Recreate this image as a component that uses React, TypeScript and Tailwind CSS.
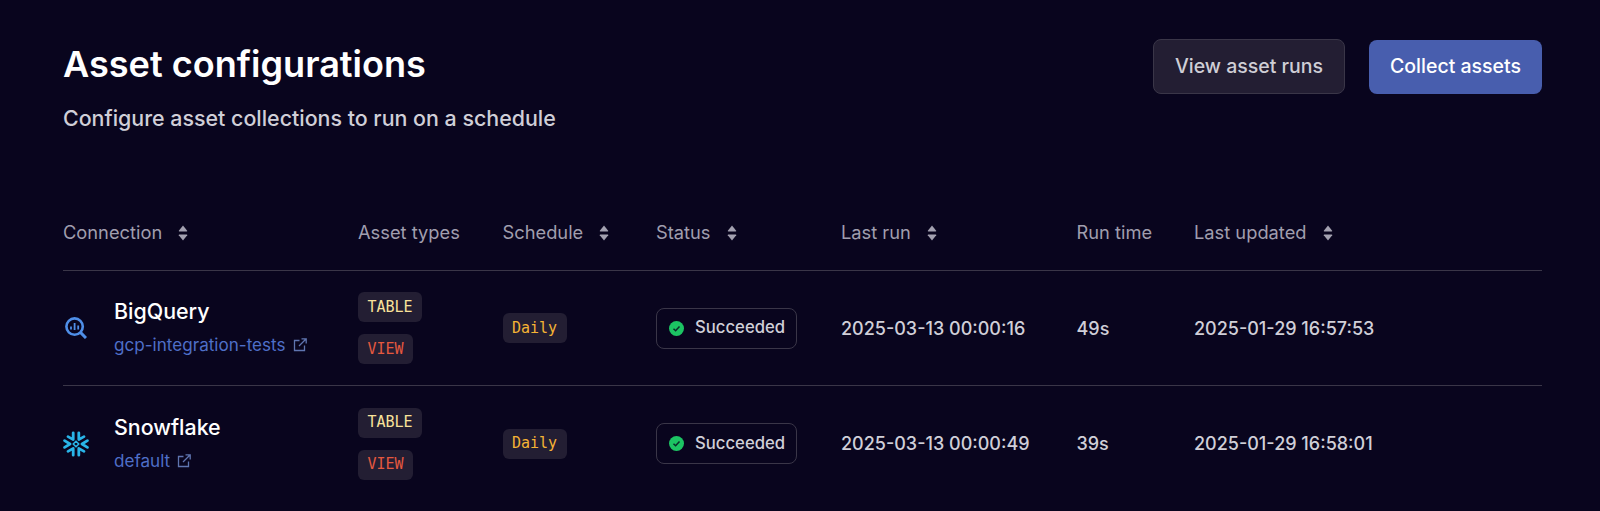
const gridCols = 'grid grid-cols-[295px_144.5px_153.5px_185px_235.5px_117.5px_1fr]';

const columns = [
  { label: 'Connection', sortable: true },
  { label: 'Asset types', sortable: false },
  { label: 'Schedule', sortable: true },
  { label: 'Status', sortable: true },
  { label: 'Last run', sortable: true },
  { label: 'Run time', sortable: false },
  { label: 'Last updated', sortable: true },
];

const rows = [
  {
    id: 'bigquery',
    name: 'BigQuery',
    project: 'gcp-integration-tests',
    lastRun: '2025-03-13 00:00:16',
    runTime: '49s',
    updated: '2025-01-29 16:57:53',
  },
  {
    id: 'snowflake',
    name: 'Snowflake',
    project: 'default',
    lastRun: '2025-03-13 00:00:49',
    runTime: '39s',
    updated: '2025-01-29 16:58:01',
  },
];

function SortIcon() {
  return (
    <svg width="10" height="16" viewBox="0 0 10 16" className="text-[#a3a1b0]" fill="currentColor">
      <path d="M5 0.5 L9.2 5.8 Q9.4 6.5 8.7 6.5 L1.3 6.5 Q0.6 6.5 0.8 5.8 Z" />
      <path d="M5 15.5 L9.2 10.2 Q9.4 9.5 8.7 9.5 L1.3 9.5 Q0.6 9.5 0.8 10.2 Z" />
    </svg>
  );
}

function BigQueryIcon() {
  return (
    <svg width="22" height="22" viewBox="0 0 22 22" fill="none" stroke="#4f8fe8" className="ml-[2px]">
      <circle cx="9.6" cy="9.6" r="8.2" strokeWidth="2.6" />
      <path d="M15.4 15.4 L21 21" strokeWidth="3" />
      <path d="M6 9.5 V12.5" strokeWidth="1.8" />
      <path d="M9.6 6 V13" strokeWidth="1.8" />
      <path d="M13.2 8.5 V12.5" strokeWidth="1.8" />
    </svg>
  );
}

function SnowflakeIcon() {
  return (
    <svg width="26" height="26" viewBox="0 0 26 26" fill="none" stroke="#29b5e8" strokeWidth="2.8" strokeLinecap="round" strokeLinejoin="round">
      <path d="M10.2 1.8 V8.6 L5 5.6" />
      <path d="M15.8 1.8 V8.6 L21 5.6" />
      <path d="M10.2 24.2 V17.4 L5 20.4" />
      <path d="M15.8 24.2 V17.4 L21 20.4" />
      <path d="M1.6 9.6 L7 13 L1.6 16.4" />
      <path d="M24.4 9.6 L19 13 L24.4 16.4" />
      <path d="M13 10.2 L15.8 13 L13 15.8 L10.2 13 Z" strokeWidth="1.6" />
    </svg>
  );
}

function ExternalIcon() {
  return (
    <svg width="14" height="14" viewBox="0 0 14 14" fill="none" stroke="#5f75b0" strokeWidth="1.3" className="ml-[7px]">
      <path d="M6.5 2.5 H1.5 V12.5 H11.5 V7.5" />
      <path d="M6 8 L13 1 M8.5 0.8 H13.2 V5.5" />
    </svg>
  );
}

function Tag({ text, color }: { text: string; color: string }) {
  return (
    <span
      className={`inline-flex h-[30px] w-fit items-center rounded-md bg-[#231e33] px-[9.5px] font-['DejaVu_Sans_Mono',monospace] text-[15px] ${color}`}
    >
      {text}
    </span>
  );
}

export default function App() {
  return (
    <div className="min-h-[511px] overflow-hidden bg-[#09051e] pl-[63px] pr-[58px] pt-[39px] font-['Inter',sans-serif]">
      <div className="flex items-start justify-between">
        <div>
          <h1 className="text-[36.1px] font-semibold leading-[50px] text-white">Asset configurations</h1>
          <p className="mt-[14px] text-[21.4px] font-medium leading-[30px] text-[#d0cfd8]">
            Configure asset collections to run on a schedule
          </p>
        </div>
        <div className="flex items-center gap-[24px]">
          <button className="h-[55px] w-[192px] rounded-lg border border-[#3a3648] bg-[#231e33] text-[19.5px] font-medium text-[#cfced6]">
            View asset runs
          </button>
          <button className="h-[54px] w-[173px] rounded-lg bg-[#485eae] text-[19.5px] font-medium text-white">
            Collect assets
          </button>
        </div>
      </div>

      <div className="mt-[64px]">
        <div className={`${gridCols} h-[74px] border-b border-[#3a3648] pb-[2px]`}>
          {columns.map((col) => (
            <div key={col.label} className="flex items-center gap-[16px] text-[18.3px] font-normal text-[#a09eae]">
              {col.label}
              {col.sortable && <SortIcon />}
            </div>
          ))}
        </div>

        {rows.map((row, i) => (
          <div
            key={row.id}
            className={`${gridCols} h-[115px] items-center text-[18px] font-medium text-[#d0cfd8] ${i === 0 ? 'border-b border-[#3a3648]' : ''}`}
          >
            <div className="flex items-center">
              <div className="flex w-[51px] items-center">{row.id === 'bigquery' ? <BigQueryIcon /> : <SnowflakeIcon />}</div>
              <div className="mb-[3px] flex flex-col gap-[7px]">
                <span className="text-[21.4px] font-medium leading-[30px] text-white">{row.name}</span>
                <span className="flex items-center text-[17.1px] font-normal leading-[24px] text-[#4f6fc8]">
                  {row.project}
                  <ExternalIcon />
                </span>
              </div>
            </div>
            <div className="flex flex-col gap-[12px]">
              <Tag text="TABLE" color="text-[#f9e29a]" />
              <Tag text="VIEW" color="text-[#e5583f]" />
            </div>
            <div>
              <Tag text="Daily" color="text-[#f5b335]" />
            </div>
            <div>
              <span className="inline-flex h-[41px] w-[141px] items-center gap-[11px] rounded-lg border border-[#3a3648] pl-[12px] text-[16.7px]">
                <svg width="15" height="15" viewBox="0 0 15 15">
                  <circle cx="7.5" cy="7.5" r="7.5" fill="#1cc463" />
                  <path d="M4.5 7.8 L6.6 9.8 L10.5 5.5" fill="none" stroke="#0b2b2a" strokeWidth="1.5" />
                </svg>
                Succeeded
              </span>
            </div>
            <div>{row.lastRun}</div>
            <div>{row.runTime}</div>
            <div>{row.updated}</div>
          </div>
        ))}
      </div>
    </div>
  );
}
